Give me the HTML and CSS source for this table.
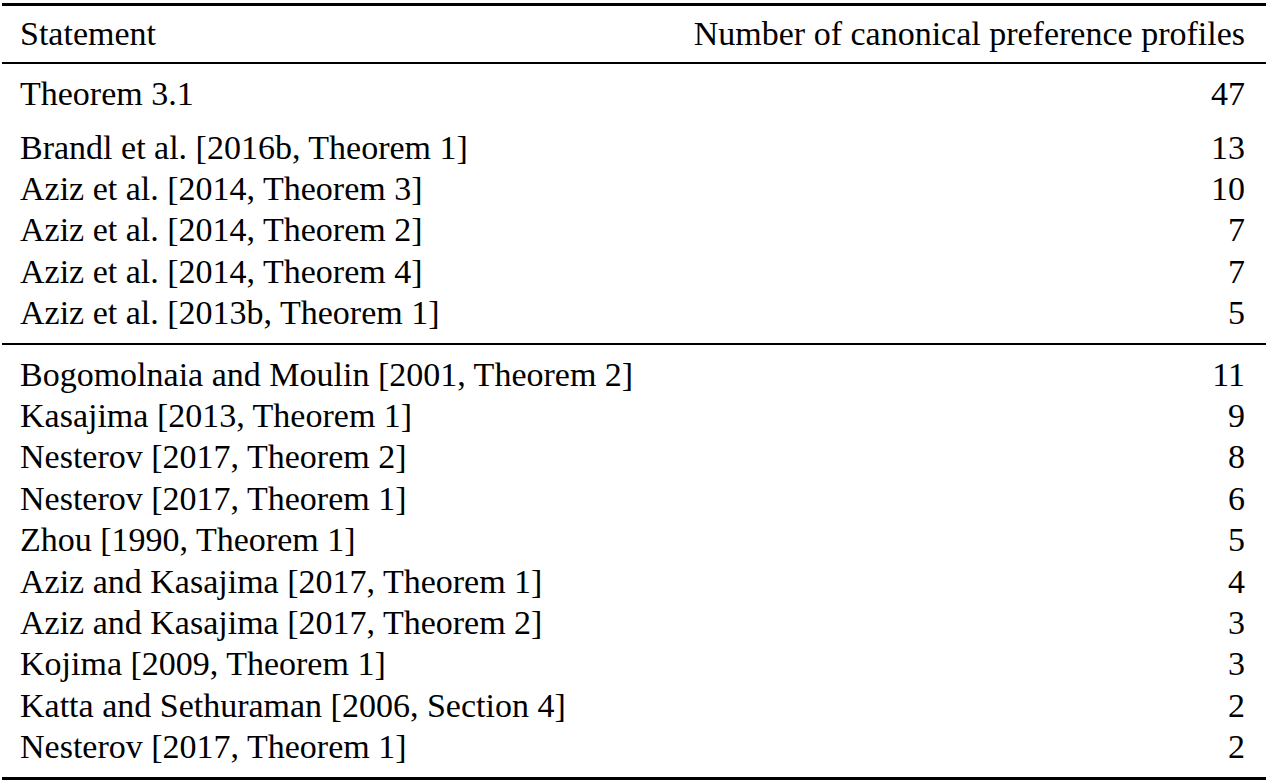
FILE: index.html
```html
<!DOCTYPE html>
<html>
<head>
<meta charset="utf-8">
<link rel="stylesheet" href="styles.css">
</head>
<body>
<div class="tbl">
  <div class="rule heavy"></div>
  <div class="row head"><span>Statement</span><span>Number of canonical preference profiles</span></div>
  <div class="rule mid"></div>
  <div class="section">
    <div class="row"><span>Theorem 3.1</span><span>47</span></div>
    <div class="gap"></div>
    <div class="row"><span>Brandl et al. [2016b, Theorem 1]</span><span>13</span></div>
    <div class="row"><span>Aziz et al. [2014, Theorem 3]</span><span>10</span></div>
    <div class="row"><span>Aziz et al. [2014, Theorem 2]</span><span>7</span></div>
    <div class="row"><span>Aziz et al. [2014, Theorem 4]</span><span>7</span></div>
    <div class="row"><span>Aziz et al. [2013b, Theorem 1]</span><span>5</span></div>
  </div>
  <div class="rule mid"></div>
  <div class="section">
    <div class="row"><span>Bogomolnaia and Moulin [2001, Theorem 2]</span><span>11</span></div>
    <div class="row"><span>Kasajima [2013, Theorem 1]</span><span>9</span></div>
    <div class="row"><span>Nesterov [2017, Theorem 2]</span><span>8</span></div>
    <div class="row"><span>Nesterov [2017, Theorem 1]</span><span>6</span></div>
    <div class="row"><span>Zhou [1990, Theorem 1]</span><span>5</span></div>
    <div class="row"><span>Aziz and Kasajima [2017, Theorem 1]</span><span>4</span></div>
    <div class="row"><span>Aziz and Kasajima [2017, Theorem 2]</span><span>3</span></div>
    <div class="row"><span>Kojima [2009, Theorem 1]</span><span>3</span></div>
    <div class="row"><span>Katta and Sethuraman [2006, Section 4]</span><span>2</span></div>
    <div class="row"><span>Nesterov [2017, Theorem 1]</span><span>2</span></div>
  </div>
  <div class="rule heavy"></div>
</div>
</body>
</html>
```
FILE: styles.css
```css
html, body {
  margin: 0;
  padding: 0;
  background: #ffffff;
}
.tbl {
  margin: 3px 0 0 2px;
  width: 1264px;
  font-family: "Liberation Serif", "DejaVu Serif", serif;
  font-size: 34px;
  color: #000;
}
.rule {
  background: #000;
}
.rule.heavy {
  height: 3px;
}
.rule.mid {
  height: 2px;
}
.row {
  display: flex;
  justify-content: space-between;
  align-items: center;
  height: 41.4px;
  line-height: 41.4px;
  padding: 0 21px 0 18px;
  white-space: nowrap;
}
.row.head {
  height: 56px;
  line-height: 56px;
}
.section {
  padding: 9px 0;
}
.gap {
  height: 12.3px;
}
```
